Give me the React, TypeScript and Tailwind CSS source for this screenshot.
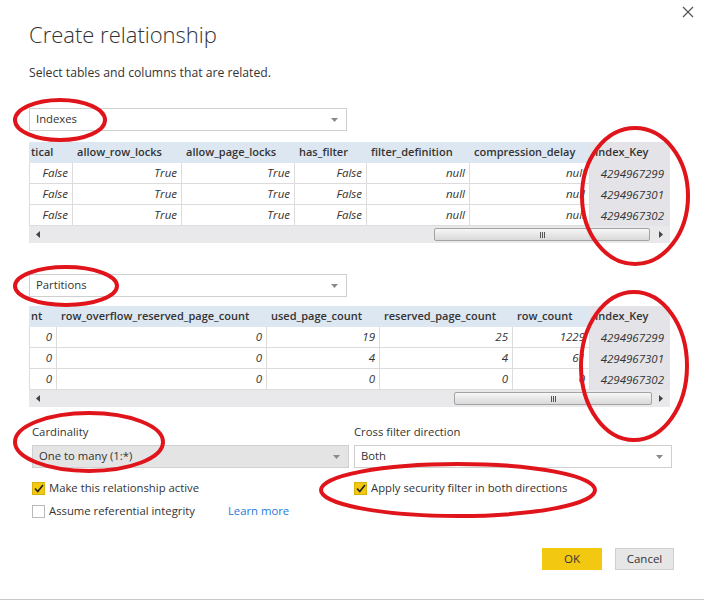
import React from 'react';

type Col = { label: string; width: number; key?: boolean; edge?: boolean };

const INDEX_COLS: Col[] = [
  { label: 'tical', width: 44, edge: true },
  { label: 'allow_row_locks', width: 109 },
  { label: 'allow_page_locks', width: 113 },
  { label: 'has_filter', width: 72 },
  { label: 'filter_definition', width: 103 },
  { label: 'compression_delay', width: 120 },
  { label: 'Index_Key', width: 80, key: true },
];

const INDEX_ROWS = [
  ['False', 'True', 'True', 'False', 'null', 'null', '4294967299'],
  ['False', 'True', 'True', 'False', 'null', 'null', '4294967301'],
  ['False', 'True', 'True', 'False', 'null', 'null', '4294967302'],
];

const PARTITION_COLS: Col[] = [
  { label: 'nt', width: 28, edge: true },
  { label: 'row_overflow_reserved_page_count', width: 210 },
  { label: 'used_page_count', width: 113 },
  { label: 'reserved_page_count', width: 133 },
  { label: 'row_count', width: 77 },
  { label: 'Index_Key', width: 80, key: true },
];

const PARTITION_ROWS = [
  ['0', '0', '19', '25', '1229', '4294967299'],
  ['0', '0', '4', '4', '61', '4294967301'],
  ['0', '0', '0', '0', '0', '4294967302'],
];

const Caret = () => (
  <svg width="7" height="4" viewBox="0 0 7 4" className="shrink-0">
    <path d="M0 0 L7 0 L3.5 4 Z" fill="#8a8a8a" />
  </svg>
);

const Dropdown: React.FC<{ value: string; disabled?: boolean; className?: string }> = ({
  value,
  disabled,
  className = '',
}) => (
  <div
    className={`flex items-center justify-between h-[23px] pl-[6px] pr-[8px] border text-[11.3px] text-[#333] ${
      disabled ? 'bg-[#e4e4e4] border-[#d0d0d0]' : 'bg-white border-[#cfcfcf]'
    } ${className}`}
  >
    <span>{value}</span>
    <Caret />
  </div>
);

const Scrollbar: React.FC<{ thumbLeft: number; thumbWidth: number }> = ({ thumbLeft, thumbWidth }) => (
  <div className="flex items-center h-[17px] bg-[#e9e9ec]">
    <svg width="4" height="7" viewBox="0 0 4 7" className="ml-[7px] shrink-0">
      <path d="M4 0 L0 3.5 L4 7 Z" fill="#444" />
    </svg>
    <div
      className="flex items-center justify-center h-[13px] border border-[#a3a3a3] rounded-[2px] bg-gradient-to-b from-[#f7f7f7] to-[#d9d9d9]"
      style={{ marginLeft: thumbLeft - 11, width: thumbWidth }}
    >
      <div className="flex gap-[1px]">
        <span className="block w-[1px] h-[6px] bg-[#555]" />
        <span className="block w-[1px] h-[6px] bg-[#555]" />
        <span className="block w-[1px] h-[6px] bg-[#555]" />
      </div>
    </div>
    <svg width="4" height="7" viewBox="0 0 4 7" className="ml-auto mr-[7px] shrink-0">
      <path d="M0 0 L4 3.5 L0 7 Z" fill="#444" />
    </svg>
  </div>
);

const DataGrid: React.FC<{ cols: Col[]; rows: string[][]; thumbLeft: number; thumbWidth: number }> = ({
  cols,
  rows,
  thumbLeft,
  thumbWidth,
}) => (
  <div className="w-[641px] text-[#333]">
    {/* Header */}
    <div className="flex h-[21px] text-[11px] font-semibold">
      {cols.map((c, i) => (
        <div
          key={i}
          style={{ width: c.width }}
          className={`flex items-center whitespace-nowrap ${
            c.key ? 'bg-[#e4e4e8] pl-[5px]' : 'bg-[#dde7f2]'
          } ${c.edge ? 'pl-[2px]' : 'pl-[4px]'}`}
        >
          {c.label}
        </div>
      ))}
    </div>
    {/* Rows */}
    {rows.map((r, ri) => (
      <div key={ri} className="flex h-[21px] text-[11.5px] italic">
        {r.map((v, ci) => (
          <div
            key={ci}
            style={{ width: cols[ci].width }}
            className={`flex items-center justify-end whitespace-nowrap ${
              cols[ci].key
                ? 'bg-[#e4e4e8] pr-[6px]'
                : 'bg-white pr-[4px] border-r border-b border-[#dcdcdc]'
            } ${ci === 0 ? 'border-l' : ''}`}
          >
            {v}
          </div>
        ))}
      </div>
    ))}
    <Scrollbar thumbLeft={thumbLeft} thumbWidth={thumbWidth} />
  </div>
);

const Checkbox: React.FC<{ checked?: boolean }> = ({ checked }) =>
  checked ? (
    <span className="flex items-center justify-center w-[13px] h-[13px] bg-[#f2c811] border border-[#d8b20a] shrink-0">
      <svg width="10" height="9" viewBox="0 0 10 9">
        <path d="M1 4.5 L3.8 7.5 L9 1" fill="none" stroke="#222" strokeWidth="1.6" />
      </svg>
    </span>
  ) : (
    <span className="block w-[13px] h-[13px] bg-white border border-[#b9b9b9] shrink-0" />
  );

export default function App() {
  return (
    <div
      className="relative w-[704px] h-[601px] bg-white overflow-hidden text-[#333]"
      style={{ fontFamily: '"Open Sans", "Noto Sans", sans-serif' }}
    >
      {/* Close */}
      <svg width="12" height="12" viewBox="0 0 12 12" className="absolute top-[6px] left-[682px]">
        <path d="M1 1 L11 11 M11 1 L1 11" stroke="#555" strokeWidth="1.2" />
      </svg>

      <div className="pl-[29px] pt-[18px]">
        <h1 className="text-[22px] font-light leading-[32px] text-[#333]">Create relationship</h1>
        <p className="mt-[14px] text-[12.2px] leading-[18px]">Select tables and columns that are related.</p>

        <Dropdown value="Indexes" className="mt-[26px] w-[318px]" />
        <div className="mt-[11px]">
          <DataGrid cols={INDEX_COLS} rows={INDEX_ROWS} thumbLeft={405} thumbWidth={216} />
        </div>

        <Dropdown value="Partitions" className="mt-[31px] w-[318px]" />
        <div className="mt-[9px]">
          <DataGrid cols={PARTITION_COLS} rows={PARTITION_ROWS} thumbLeft={425} thumbWidth={198} />
        </div>

        {/* Options */}
        <div className="ml-[3px] mt-[16px] flex gap-[5px] w-[640px] text-[11.3px]">
          <div className="w-[317px]">
            <div className="leading-[18px]">Cardinality</div>
            <Dropdown value="One to many (1:*)" disabled className="mt-[4px]" />
            <div className="mt-[14px] flex items-center gap-[4px] h-[13px]">
              <Checkbox checked />
              <span>Make this relationship active</span>
            </div>
            <div className="mt-[10px] flex items-center gap-[4px] h-[13px]">
              <Checkbox />
              <span>Assume referential integrity</span>
              <span className="ml-[29px] text-[#1f7ad6]">Learn more</span>
            </div>
          </div>
          <div className="w-[318px]">
            <div className="leading-[18px]">Cross filter direction</div>
            <Dropdown value="Both" className="mt-[4px]" />
            <div className="mt-[14px] flex items-center gap-[4px] h-[13px]">
              <Checkbox checked />
              <span>Apply security filter in both directions</span>
            </div>
          </div>
        </div>

        {/* Buttons */}
        <div className="mt-[30px] mr-[30px] flex justify-end gap-[13px] text-[11.5px]">
          <button className="w-[60px] h-[22px] bg-[#f2c811] text-[#333]">OK</button>
          <button className="w-[59px] h-[22px] bg-[#e6e6e6] border border-[#cfcfcf] text-[#333]">Cancel</button>
        </div>
      </div>

      <div className="absolute left-0 right-0 bottom-[1px] h-[1px] bg-[#c9c9c9]" />

      {/* Red annotation ellipses */}
      <svg width="704" height="601" className="absolute inset-0 pointer-events-none">
        <g fill="none" stroke="#e0141b" strokeWidth="4">
          <ellipse cx="60" cy="120" rx="45" ry="20" />
          <ellipse cx="635" cy="196" rx="53" ry="68" />
          <ellipse cx="66" cy="286" rx="51" ry="19" />
          <ellipse cx="634" cy="366" rx="53" ry="74" />
          <ellipse cx="89" cy="442" rx="74" ry="29" />
          <ellipse cx="458" cy="490" rx="137" ry="26" />
        </g>
      </svg>
    </div>
  );
}
